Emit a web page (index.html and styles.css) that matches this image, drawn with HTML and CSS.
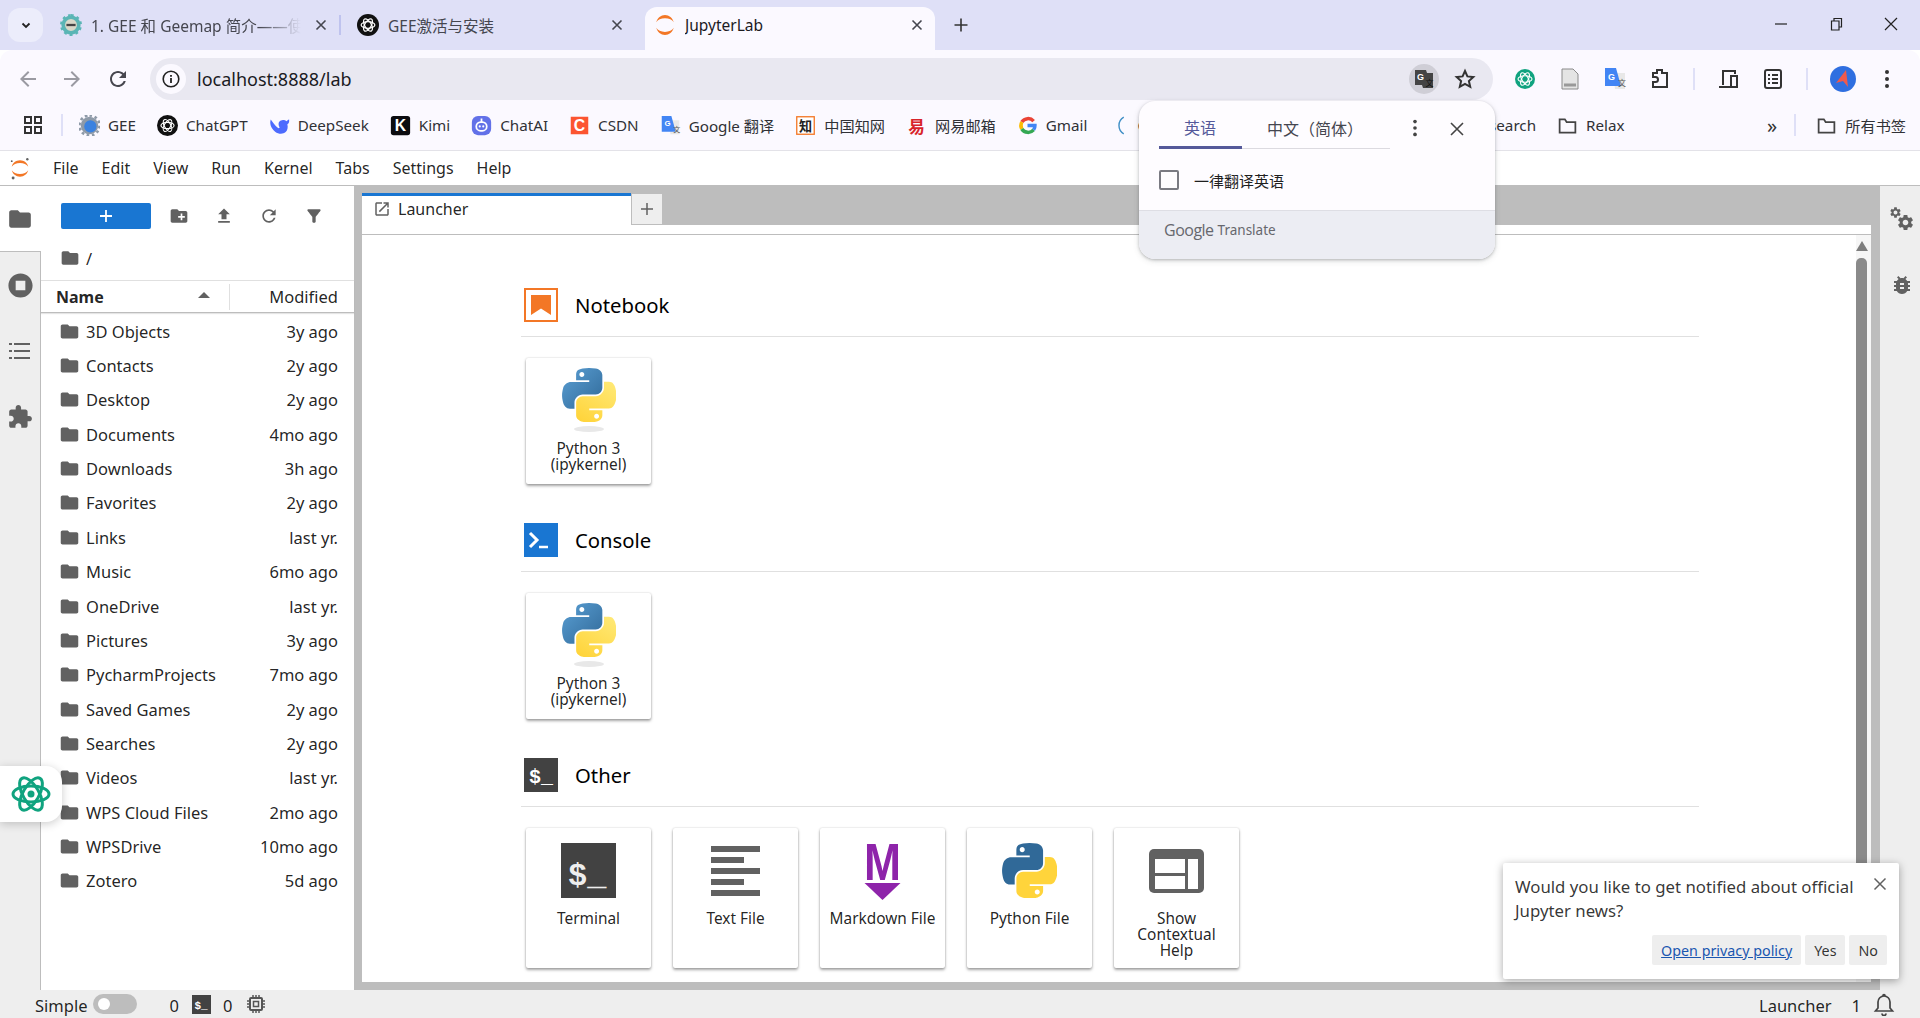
FILE: index.html
```html
<!DOCTYPE html>
<html lang="zh">
<head>
<meta charset="utf-8">
<title>JupyterLab</title>
<link rel="stylesheet" href="styles.css">
</head>
<body>
<svg class="defs" width="0" height="0" aria-hidden="true">
  <defs>
    <linearGradient id="pyb" x1="0" y1="0" x2="1" y2="1"><stop offset="0" stop-color="#5a9fd4"/><stop offset="1" stop-color="#306998"/></linearGradient>
    <linearGradient id="pyy" x1="0.2" y1="1" x2="0.8" y2="0"><stop offset="0" stop-color="#ffd43b"/><stop offset="1" stop-color="#ffe873"/></linearGradient>
    <symbol id="py-flat" viewBox="0 0 110 110">
      <path fill="#306998" d="M54.9 0c-4.58.02-8.96.41-12.8 1.09C30.8 3.09 28.73 7.27 28.73 14.98v10.18h26.73v3.39H18.7c-7.77 0-14.57 4.67-16.7 13.56-2.45 10.19-2.56 16.55 0 27.19 1.9 7.92 6.44 13.56 14.21 13.56h9.19V70.65c0-8.83 7.64-16.62 16.7-16.62h26.7c7.43 0 13.37-6.12 13.37-13.59V14.98c0-7.25-6.12-12.7-13.37-13.9C64.18.32 59.48-.02 54.9 0zM40.44 8.2c2.76 0 5.02 2.29 5.02 5.11 0 2.81-2.26 5.08-5.02 5.08-2.77 0-5.02-2.27-5.02-5.08 0-2.82 2.25-5.11 5.02-5.11z"/>
      <path fill="#ffd43b" d="M85.54 28.55v11.88c0 9.21-7.81 16.96-16.7 16.96H42.14c-7.31 0-13.37 6.26-13.37 13.59V96c0 7.25 6.3 11.51 13.37 13.59 8.46 2.49 16.58 2.94 26.7 0 6.73-1.95 13.37-5.87 13.37-13.59V85.82H55.5v-3.39h40.07c7.77 0 10.67-5.42 13.37-13.56 2.79-8.38 2.67-16.44 0-27.19-1.92-7.74-5.58-13.56-13.37-13.56H85.54zM70.51 92.99c2.77 0 5.02 2.27 5.02 5.08 0 2.82-2.25 5.11-5.02 5.11-2.76 0-5.02-2.29-5.02-5.11 0-2.81 2.26-5.08 5.02-5.08z"/>
    </symbol>
    <symbol id="py-grad" viewBox="0 0 110 110">
      <path fill="url(#pyb)" d="M54.9 0c-4.58.02-8.96.41-12.8 1.09C30.8 3.09 28.73 7.27 28.73 14.98v10.18h26.73v3.39H18.7c-7.77 0-14.57 4.67-16.7 13.56-2.45 10.19-2.56 16.55 0 27.19 1.9 7.92 6.44 13.56 14.21 13.56h9.19V70.65c0-8.83 7.64-16.62 16.7-16.62h26.7c7.43 0 13.37-6.12 13.37-13.59V14.98c0-7.25-6.12-12.7-13.37-13.9C64.18.32 59.48-.02 54.9 0zM40.44 8.2c2.76 0 5.02 2.29 5.02 5.11 0 2.81-2.26 5.08-5.02 5.08-2.77 0-5.02-2.27-5.02-5.08 0-2.82 2.25-5.11 5.02-5.11z"/>
      <path fill="url(#pyy)" d="M85.54 28.55v11.88c0 9.21-7.81 16.96-16.7 16.96H42.14c-7.31 0-13.37 6.26-13.37 13.59V96c0 7.25 6.3 11.51 13.37 13.59 8.46 2.49 16.58 2.94 26.7 0 6.73-1.95 13.37-5.87 13.37-13.59V85.82H55.5v-3.39h40.07c7.77 0 10.67-5.42 13.37-13.56 2.79-8.38 2.67-16.44 0-27.19-1.92-7.74-5.58-13.56-13.37-13.56H85.54zM70.51 92.99c2.77 0 5.02 2.27 5.02 5.08 0 2.82-2.25 5.11-5.02 5.11-2.76 0-5.02-2.29-5.02-5.11 0-2.81 2.26-5.08 5.02-5.08z"/>
    </symbol>
    <symbol id="folder" viewBox="0 0 24 24"><path fill="#616161" d="M10 4H4c-1.1 0-2 .9-2 2v12c0 1.1.9 2 2 2h16c1.1 0 2-.9 2-2V8c0-1.1-.9-2-2-2h-8l-2-2z"/></symbol>
    <symbol id="gear" viewBox="0 0 24 24"><path fill="#616161" d="M19.14 12.94c.04-.3.06-.61.06-.94 0-.32-.02-.64-.07-.94l2.03-1.58c.18-.14.23-.41.12-.61l-1.92-3.32c-.12-.22-.37-.29-.59-.22l-2.39.96c-.5-.38-1.03-.7-1.62-.94l-.36-2.54c-.04-.24-.24-.41-.48-.41h-3.84c-.24 0-.43.17-.47.41l-.36 2.54c-.59.24-1.13.57-1.62.94l-2.39-.96c-.22-.08-.47 0-.59.22L2.74 8.87c-.12.21-.08.47.12.61l2.03 1.58c-.05.3-.09.63-.09.94s.02.64.07.94l-2.03 1.58c-.18.14-.23.41-.12.61l1.92 3.32c.12.22.37.29.59.22l2.39-.96c.5.38 1.03.7 1.62.94l.36 2.54c.05.24.24.41.48.41h3.84c.24 0 .44-.17.47-.41l.36-2.54c.59-.24 1.13-.56 1.62-.94l2.39.96c.22.08.47 0 .59-.22l1.92-3.32c.12-.22.07-.47-.12-.61l-2.01-1.58zM12 15.6c-1.98 0-3.6-1.62-3.6-3.6s1.62-3.6 3.6-3.6 3.6 1.62 3.6 3.6-1.62 3.6-3.6 3.6z"/></symbol>
    <symbol id="x" viewBox="0 0 16 16"><path fill="none" stroke="currentColor" stroke-width="1.6" d="M3.5 3.5l9 9M12.5 3.5l-9 9"/></symbol>
    <symbol id="openai" viewBox="0 0 24 24">
      <circle cx="12" cy="12" r="12" fill="#111"/>
      <g fill="none" stroke="#fff" stroke-width="1.3"><ellipse cx="12" cy="12" rx="7.5" ry="3.6"/><ellipse cx="12" cy="12" rx="7.5" ry="3.6" transform="rotate(60 12 12)"/><ellipse cx="12" cy="12" rx="7.5" ry="3.6" transform="rotate(120 12 12)"/></g>
    </symbol>
    <symbol id="bm-folder" viewBox="0 0 24 24"><path fill="none" stroke="#444" stroke-width="2" d="M3 5h6l2 3h10v12H3z"/></symbol>
    <symbol id="gt" viewBox="0 0 24 24">
      <path fill="#e8e8e8" d="M10 6h12v16H12z"/>
      <path fill="#4285f4" d="M2 1h11l5 18H2z"/>
      <text x="5" y="13" class="svg-g">G</text>
      <text x="15" y="19" class="svg-wen">文</text>
    </symbol>
  </defs>
</svg>

<header class="tabstrip">
  <button class="tab-menu"><svg viewBox="0 0 12 12" width="12" height="12"><path d="M2.5 4.5L6 8l3.5-3.5" fill="none" stroke="#222" stroke-width="1.8"/></svg></button>
  <div class="tab tab-one">
    <svg class="fav" viewBox="0 0 24 24"><circle cx="12" cy="12" r="8.5" fill="#d8d8c8" stroke="#5ab5b5" stroke-width="4"/><path fill="none" stroke="#5ab5b5" stroke-width="3" stroke-dasharray="3 3.2" d="M12 1.5a10.5 10.5 0 1 1-.01 0"/><path d="M7 12h10" stroke="#444" stroke-width="2.5"/></svg>
    <span class="tab-title fade">1. GEE 和 Geemap 简介——使用</span>
    <svg class="tab-x" width="16" height="16"><use href="#x"/></svg>
  </div>
  <i class="tab-sep"></i>
  <div class="tab tab-two">
    <svg class="fav" width="22" height="22"><use href="#openai"/></svg>
    <span class="tab-title">GEE激活与安装</span>
    <svg class="tab-x" width="16" height="16"><use href="#x"/></svg>
  </div>
  <div class="tab tab-active">
    <svg class="fav" viewBox="0 0 24 24"><path fill="#f37726" d="M12 4.5c-4.3 0-8 1.700-9.500 4.400C3.700 4.300 7.500 1 12 1s8.300 3.300 9.500 7.900C20 6.200 16.300 4.500 12 4.500z"/><path fill="#f37726" d="M12 19.500c4.300 0 8-1.700 9.500-4.400C20.300 19.700 16.500 23 12 23s-8.300-3.300-9.500-7.900C4 17.800 7.700 19.500 12 19.500z"/></svg>
    <span class="tab-title">JupyterLab</span>
    <svg class="tab-x" width="16" height="16"><use href="#x"/></svg>
  </div>
  <svg class="new-tab" viewBox="0 0 16 16" width="16" height="16"><path d="M8 1.500v13M1.500 8h13" stroke="#333" stroke-width="1.600"/></svg>
  <div class="win-btns">
    <svg viewBox="0 0 16 16" width="16" height="16"><path d="M2 8h12" stroke="#222" stroke-width="1.200"/></svg>
    <svg viewBox="0 0 16 16" width="16" height="16"><path d="M3.500 5h7.500v9H3.500zM6 5V2.500h7.500V11H11" fill="none" stroke="#222" stroke-width="1.200"/></svg>
    <svg viewBox="0 0 16 16" width="16" height="16"><path d="M2 2l12 12M14 2L2 14" stroke="#222" stroke-width="1.200"/></svg>
  </div>
</header>

<section class="toolbar">
  <svg class="nav nav-off" viewBox="0 0 24 24"><path fill="#9a9aa2" d="M20 11H7.800l5.600-5.600L12 4l-8 8 8 8 1.400-1.400L7.800 13H20z"/></svg>
  <svg class="nav nav-off" viewBox="0 0 24 24"><path fill="#9a9aa2" d="M4 11h12.200l-5.600-5.600L12 4l8 8-8 8-1.400-1.400 5.600-5.600H4z"/></svg>
  <svg class="nav" viewBox="0 0 24 24"><path fill="#47474f" d="M17.650 6.350C16.200 4.900 14.210 4 12 4c-4.420 0-7.990 3.580-7.990 8s3.570 8 7.990 8c3.730 0 6.840-2.550 7.730-6h-2.080c-.82 2.330-3.040 4-5.650 4-3.310 0-6-2.690-6-6s2.690-6 6-6c1.660 0 3.140.69 4.220 1.780L13 11h7V4l-2.350 2.350z"/></svg>
  <div class="omnibox">
    <span class="info"><svg viewBox="0 0 20 20" width="20" height="20"><circle cx="10" cy="10" r="7.800" fill="none" stroke="#222" stroke-width="1.600"/><path d="M10 9v5M10 6v1.800" stroke="#222" stroke-width="1.800"/></svg></span>
    <span class="url">localhost:8888/lab</span>
    <span class="omni-gt"><svg viewBox="0 0 24 24" width="24" height="24"><path fill="#444" d="M3 3h11l1 3h6v15H11l-1-3H3z"/><text x="5" y="13" class="svg-gw">G</text><text x="13.500" y="19" class="svg-wenw">文</text></svg></span>
    <svg class="star" viewBox="0 0 24 24" width="24" height="24"><path fill="none" stroke="#333" stroke-width="2" d="M12 4l2.400 5.400 5.900.6-4.400 4 1.300 5.800-5.200-3-5.200 3 1.300-5.800-4.400-4 5.900-.6z"/></svg>
  </div>
  <div class="ext-row">
    <svg viewBox="0 0 24 24"><circle cx="12" cy="12" r="10" fill="#10a37f"/><g fill="none" stroke="#fff" stroke-width="1.100"><ellipse cx="12" cy="12" rx="7" ry="3.200"/><ellipse cx="12" cy="12" rx="7" ry="3.200" transform="rotate(60 12 12)"/><ellipse cx="12" cy="12" rx="7" ry="3.200" transform="rotate(120 12 12)"/></g></svg>
    <svg viewBox="0 0 24 24"><path fill="#e4e4e4" stroke="#8a8a8a" d="M4 2h11l5 5v15H4z"/><path d="M6 18h12" stroke="#999" stroke-width="3"/></svg>
    <svg viewBox="0 0 24 24"><use href="#gt"/></svg>
    <svg viewBox="0 0 24 24"><path fill="none" stroke="#333" stroke-width="2" d="M5 6h4V3h5v3h5v14H5v-5h2.500a2.500 2.500 0 0 0 0-5H5z"/></svg>
    <i class="ext-sep"></i>
    <svg viewBox="0 0 24 24"><path fill="none" stroke="#333" stroke-width="2" d="M19 7V4H7v14M3 20h11M15 9h6v11h-6z"/></svg>
    <svg viewBox="0 0 24 24"><rect x="4" y="3" width="16" height="18" rx="2" fill="none" stroke="#333" stroke-width="2"/><path d="M7 8h2M11 8h6M7 12h2M11 12h6M7 16h2M11 16h6" stroke="#333" stroke-width="2"/></svg>
    <i class="ext-sep"></i>
    <svg class="avatar" viewBox="0 0 28 28"><circle cx="14" cy="14" r="13" fill="#2f6fe0"/><path fill="#ef5a4c" d="M17 5l2 17-5-6-7 2z"/></svg>
    <svg class="kebab" viewBox="0 0 24 24"><circle cx="12" cy="5" r="2" fill="#333"/><circle cx="12" cy="12" r="2" fill="#333"/><circle cx="12" cy="19" r="2" fill="#333"/></svg>
  </div>
</section>

<nav class="bookmarks">
  <svg class="apps" viewBox="0 0 22 22" width="22" height="22"><path fill="none" stroke="#333" stroke-width="2" d="M3 3h6v6H3zM13 3h6v6h-6zM3 13h6v6H3zM13 13h6v6h-6z"/></svg>
  <i class="bm-sep"></i>
  <a class="bm"><svg viewBox="0 0 24 24"><circle cx="12" cy="12" r="10" fill="#8e9aa8"/><path fill="none" stroke="#8e9aa8" stroke-width="3" stroke-dasharray="3 3" d="M12 .5a11.500 11.500 0 1 1-.01 0"/><circle cx="13" cy="13" r="7" fill="#3b82e0"/></svg>GEE</a>
  <a class="bm"><svg viewBox="0 0 24 24"><use href="#openai"/></svg>ChatGPT</a>
  <a class="bm"><svg viewBox="0 0 24 24"><path fill="#4d6bfe" d="M23 5c-1.500 0-2 1.500-3 2-1.500-1-3-1.500-5-1-4 .5-5 4-3 8 .5 1-1 1.500-2 .5C7 12 4 8 2 5c-1.500 4 0 10 5 14 4 3 9 3 12 .5 2-2 3-5 2-9 1-.5 2.500-2 2-5.500z"/></svg>DeepSeek</a>
  <a class="bm"><svg viewBox="0 0 24 24"><rect x="1" y="1" width="22" height="22" rx="3" fill="#0c0c10"/><text x="12" y="18" class="svg-k">K</text></svg>Kimi</a>
  <a class="bm"><svg viewBox="0 0 24 24"><rect x="1" y="1" width="22" height="22" rx="7" fill="#6271e8"/><rect x="6" y="8" width="12" height="10" rx="5" fill="none" stroke="#fff" stroke-width="2"/><circle cx="10" cy="13" r="1.200" fill="#fff"/><circle cx="14" cy="13" r="1.200" fill="#fff"/><path d="M12 4v4" stroke="#fff" stroke-width="2"/></svg>ChatAI</a>
  <a class="bm"><svg viewBox="0 0 24 24"><rect x="2" y="2" width="20" height="20" fill="#fc5531"/><text x="12" y="18" class="svg-k">C</text></svg>CSDN</a>
  <a class="bm"><svg viewBox="0 0 24 24"><use href="#gt"/></svg>Google 翻译</a>
  <a class="bm"><svg viewBox="0 0 24 24"><rect x="2" y="2" width="20" height="20" fill="#fff" stroke="#f37726" stroke-width="1.500"/><text x="12" y="18" class="svg-zhi">知</text></svg>中国知网</a>
  <a class="bm"><svg viewBox="0 0 24 24"><text x="12" y="20" class="svg-yi">易</text></svg>网易邮箱</a>
  <a class="bm"><svg viewBox="0 0 24 24"><path fill="none" stroke-width="4" stroke="#ea4335" d="M19 7a8.500 8.500 0 0 0-13.500 1"/><path fill="none" stroke-width="4" stroke="#fbbc05" d="M5.500 8a8.500 8.500 0 0 0 0 8"/><path fill="none" stroke-width="4" stroke="#34a853" d="M5.500 16a8.500 8.500 0 0 0 13.500 1"/><path fill="none" stroke-width="4" stroke="#4285f4" d="M19 17a8.500 8.500 0 0 0 1.500-5H12"/></svg>Gmail</a>
  <a class="bm"><svg viewBox="0 0 24 24"><path fill="none" stroke="#3f8fc6" stroke-width="1.600" d="M18 2.500A11 11 0 0 0 18 21.500"/></svg>Copilot</a>
  <a class="bm bm-search">Research</a>
  <a class="bm bm-relax"><svg viewBox="0 0 24 24"><use href="#bm-folder"/></svg>Relax</a>
  <span class="bm-more">»</span>
  <i class="bm-sep bm-sep-r"></i>
  <a class="bm bm-all"><svg viewBox="0 0 24 24"><use href="#bm-folder"/></svg>所有书签</a>
</nav>

<main class="lab">
  <div class="menubar">
    <svg class="jp-logo" viewBox="0 0 24 24" width="22" height="26"><path fill="#f37726" d="M12 6.500c-4 0-7.500 1.500-9 4C4 6.500 7.500 3.500 12 3.500s8 3 9 7c-1.500-2.500-5-4-9-4z"/><path fill="#f37726" d="M12 18.500c4 0 7.500-1.500 9-4-1 4-4.500 7-9 7s-8-3-9-7c1.500 2.500 5 4 9 4z"/><circle cx="20" cy="2.500" r="1.300" fill="#616161"/><circle cx="3" cy="4.500" r="1" fill="#616161"/><circle cx="4.500" cy="23" r="1.600" fill="#616161"/></svg>
    <span>File</span><span>Edit</span><span>View</span><span>Run</span><span>Kernel</span><span>Tabs</span><span>Settings</span><span>Help</span>
  </div>
  <div class="lab-body">
    <aside class="side-left">
      <div class="side-tab side-active"><svg viewBox="0 0 24 24" width="26" height="26"><use href="#folder"/></svg></div>
      <div class="side-rest">
        <div class="side-tab"><svg viewBox="0 0 24 24" width="29" height="29"><path fill="#616161" d="M12 2C6.480 2 2 6.480 2 12s4.480 10 10 10 10-4.480 10-10S17.520 2 12 2zm4 14H8V8h8v8z"/></svg></div>
        <div class="side-tab"><svg viewBox="0 0 24 24" width="24" height="24"><path d="M6 5h16M6 12h16M6 19h16M1 5h3M1 12h3M1 19h3" stroke="#616161" stroke-width="2" fill="none"/></svg></div>
        <div class="side-tab"><svg viewBox="0 0 24 24" width="26" height="26"><path fill="#616161" d="M20.500 11H19V7c0-1.100-.9-2-2-2h-4V3.500C13 2.120 11.880 1 10.500 1S8 2.120 8 3.500V5H4c-1.100 0-1.990.9-1.990 2v3.800H3.500c1.490 0 2.700 1.210 2.700 2.700s-1.210 2.700-2.700 2.700H2V20c0 1.100.9 2 2 2h3.800v-1.500c0-1.490 1.210-2.700 2.700-2.700 1.490 0 2.700 1.210 2.700 2.700V22H17c1.100 0 2-.9 2-2v-4h1.500c1.380 0 2.500-1.120 2.500-2.500S21.880 11 20.500 11z"/></svg></div>
      </div>
    </aside>

    <section class="files">
      <div class="file-tools">
        <button class="new-btn"><svg viewBox="0 0 16 16" width="16" height="16"><path d="M8 2v12M2 8h12" stroke="#fff" stroke-width="1.800"/></svg></button>
        <svg viewBox="0 0 24 24" width="20" height="20"><path fill="#616161" d="M20 6h-8l-2-2H4c-1.110 0-2 .89-2 2v12c0 1.110.89 2 2 2h16c1.110 0 2-.89 2-2V8c0-1.110-.89-2-2-2zm-1 8h-3v3h-2v-3h-3v-2h3V9h2v3h3v2z"/></svg>
        <svg viewBox="0 0 24 24" width="20" height="20"><path fill="#616161" d="M9 16h6v-6h4l-7-7-7 7h4zm-4 2h14v2H5z"/></svg>
        <svg viewBox="0 0 24 24" width="20" height="20"><path fill="#616161" d="M17.650 6.350C16.200 4.900 14.210 4 12 4c-4.420 0-7.990 3.580-7.990 8s3.570 8 7.990 8c3.730 0 6.840-2.550 7.730-6h-2.080c-.82 2.330-3.040 4-5.650 4-3.310 0-6-2.690-6-6s2.690-6 6-6c1.660 0 3.140.69 4.220 1.780L13 11h7V4l-2.350 2.350z"/></svg>
        <svg viewBox="0 0 24 24" width="20" height="20"><path fill="#616161" d="M4.250 5.610C6.270 8.200 10 13 10 13v6c0 .55.45 1 1 1h2c.55 0 1-.45 1-1v-6s3.720-4.800 5.740-7.390C20.250 4.950 19.780 4 18.950 4H5.040c-.83 0-1.300.95-.79 1.610z"/></svg>
      </div>
      <div class="crumbs"><svg viewBox="0 0 24 24" width="20" height="20"><use href="#folder"/></svg><span>/</span></div>
      <div class="file-head">
        <div class="col-name">Name<svg viewBox="0 0 12 6" width="12" height="6"><path d="M0 6L6 0l6 6z" fill="#616161"/></svg></div>
        <div class="col-mod">Modified</div>
      </div>
      <ul class="file-list">
        <li><svg viewBox="0 0 24 24"><use href="#folder"/></svg><span class="fname">3D Objects</span><span>3y ago</span></li>
        <li><svg viewBox="0 0 24 24"><use href="#folder"/></svg><span class="fname">Contacts</span><span>2y ago</span></li>
        <li><svg viewBox="0 0 24 24"><use href="#folder"/></svg><span class="fname">Desktop</span><span>2y ago</span></li>
        <li><svg viewBox="0 0 24 24"><use href="#folder"/></svg><span class="fname">Documents</span><span>4mo ago</span></li>
        <li><svg viewBox="0 0 24 24"><use href="#folder"/></svg><span class="fname">Downloads</span><span>3h ago</span></li>
        <li><svg viewBox="0 0 24 24"><use href="#folder"/></svg><span class="fname">Favorites</span><span>2y ago</span></li>
        <li><svg viewBox="0 0 24 24"><use href="#folder"/></svg><span class="fname">Links</span><span>last yr.</span></li>
        <li><svg viewBox="0 0 24 24"><use href="#folder"/></svg><span class="fname">Music</span><span>6mo ago</span></li>
        <li><svg viewBox="0 0 24 24"><use href="#folder"/></svg><span class="fname">OneDrive</span><span>last yr.</span></li>
        <li><svg viewBox="0 0 24 24"><use href="#folder"/></svg><span class="fname">Pictures</span><span>3y ago</span></li>
        <li><svg viewBox="0 0 24 24"><use href="#folder"/></svg><span class="fname">PycharmProjects</span><span>7mo ago</span></li>
        <li><svg viewBox="0 0 24 24"><use href="#folder"/></svg><span class="fname">Saved Games</span><span>2y ago</span></li>
        <li><svg viewBox="0 0 24 24"><use href="#folder"/></svg><span class="fname">Searches</span><span>2y ago</span></li>
        <li><svg viewBox="0 0 24 24"><use href="#folder"/></svg><span class="fname">Videos</span><span>last yr.</span></li>
        <li><svg viewBox="0 0 24 24"><use href="#folder"/></svg><span class="fname">WPS Cloud Files</span><span>2mo ago</span></li>
        <li><svg viewBox="0 0 24 24"><use href="#folder"/></svg><span class="fname">WPSDrive</span><span>10mo ago</span></li>
        <li><svg viewBox="0 0 24 24"><use href="#folder"/></svg><span class="fname">Zotero</span><span>5d ago</span></li>
      </ul>
    </section>

    <section class="work">
      <div class="dock-tabs">
        <div class="dock-tab"><svg viewBox="0 0 24 24" width="18" height="18"><path fill="#616161" d="M19 19H5V5h7V3H5c-1.110 0-2 .9-2 2v14c0 1.100.89 2 2 2h14c1.100 0 2-.9 2-2v-7h-2v7zM14 3v2h3.590l-9.830 9.830 1.410 1.410L19 6.410V10h2V3h-7z"/></svg><span>Launcher</span></div>
        <div class="dock-add"><svg viewBox="0 0 16 16" width="16" height="16"><path d="M8 2v12M2 8h12" stroke="#616161" stroke-width="1.500"/></svg></div>
      </div>
      <div class="dock-strip"></div>
      <div class="launcher-wrap">
        <div class="launcher">
          <div class="l-section l-kernel">
            <div class="l-head">
              <svg class="l-icon" viewBox="0 0 34 34"><rect x="1" y="1" width="32" height="32" fill="none" stroke="#f37726" stroke-width="2"/><path fill="#f37726" d="M7 7h20v20l-10-6.500L7 27z"/></svg>
              <h2>Notebook</h2>
            </div>
            <div class="l-cards">
              <div class="card card-kernel"><svg class="k-logo" viewBox="0 0 54 64"><use href="#py-grad" width="54" height="54"/><ellipse cx="27" cy="61" rx="15" ry="3" fill="#e8e8e8"/></svg><p>Python 3<br>(ipykernel)</p></div>
            </div>
          </div>
          <div class="l-section l-kernel">
            <div class="l-head">
              <svg class="l-icon" viewBox="0 0 34 34"><rect width="34" height="34" fill="#1976d2"/><path d="M6 10l7 7-7 7" fill="none" stroke="#fff" stroke-width="3"/><path d="M15 24h9" stroke="#fff" stroke-width="2.500"/></svg>
              <h2>Console</h2>
            </div>
            <div class="l-cards">
              <div class="card card-kernel"><svg class="k-logo" viewBox="0 0 54 64"><use href="#py-grad" width="54" height="54"/><ellipse cx="27" cy="61" rx="15" ry="3" fill="#e8e8e8"/></svg><p>Python 3<br>(ipykernel)</p></div>
            </div>
          </div>
          <div class="l-section">
            <div class="l-head">
              <svg class="l-icon" viewBox="0 0 34 34"><rect width="34" height="34" fill="#424242"/><text x="5" y="25" class="svg-dollar">$_</text></svg>
              <h2>Other</h2>
            </div>
            <div class="l-cards">
              <div class="card"><svg class="c-icon" viewBox="0 0 55 55"><rect width="55" height="55" fill="#424242"/><text x="7" y="42" class="svg-dollar-lg">$_</text></svg><p>Terminal</p></div>
              <div class="card"><svg class="c-icon" viewBox="0 0 55 55"><path fill="#616161" d="M3 3h49v6H3zM3 14h33v6H3zM3 25h49v6H3zM3 36h33v6H3zM3 47h49v6H3z"/></svg><p>Text File</p></div>
              <div class="card"><svg class="c-icon c-md" viewBox="0 0 55 55"><text x="9" y="37" class="svg-md" textLength="37" lengthAdjust="spacingAndGlyphs">M</text><path fill="#8e24aa" d="M9.500 40h36L27.500 57z"/></svg><p>Markdown File</p></div>
              <div class="card"><svg class="c-icon" viewBox="0 0 55 55"><use href="#py-flat" width="55" height="55"/></svg><p>Python File</p></div>
              <div class="card"><svg class="c-icon" viewBox="0 0 55 55"><rect y="6" width="55" height="44" rx="5" fill="#616161"/><path fill="#fff" d="M6 16h30v14H6zM6 33h30v13H6zM39 16h10v30H39z"/></svg><p>Show<br>Contextual<br>Help</p></div>
            </div>
          </div>
        </div>
        <div class="scrollbar">
          <i class="sb-up"></i>
          <i class="sb-thumb"></i>
        </div>
      </div>
    </section>

    <aside class="side-right">
      <div class="r-tab"><svg viewBox="0 0 26 26" width="26" height="26"><use href="#gear" x="0" y="0" width="13" height="13"/><use href="#gear" x="7" y="7" width="19" height="19"/></svg></div>
      <div class="r-tab"><svg viewBox="0 0 24 24" width="24" height="24"><path fill="#616161" d="M20 8h-2.810c-.45-.78-1.070-1.450-1.820-1.960L17 4.410 15.590 3l-2.170 2.170C12.960 5.060 12.490 5 12 5s-.96.06-1.410.17L8.410 3 7 4.410l1.620 1.630C7.880 6.550 7.260 7.220 6.810 8H4v2h2.090c-.05.33-.09.66-.09 1v1H4v2h2v1c0 .34.04.67.09 1H4v2h2.810c1.040 1.790 2.970 3 5.190 3s4.150-1.210 5.190-3H20v-2h-2.090c.05-.33.09-.66.09-1v-1h2v-2h-2v-1c0-.34-.04-.67-.09-1H20V8zm-6 8h-4v-2h4v2zm0-4h-4v-2h4v2z"/></svg></div>
    </aside>
  </div>
  <footer class="status">
    <span class="st-simple">Simple</span>
    <span class="toggle"><i></i></span>
    <span class="st-num">0</span>
    <svg class="st-term" viewBox="0 0 19 19" width="19" height="19"><rect width="19" height="19" fill="#424242"/><text x="2.500" y="14" class="svg-dollar-sm">$_</text></svg>
    <span class="st-num2">0</span>
    <svg class="st-chip" viewBox="0 0 20 20" width="20" height="20"><path fill="none" stroke="#555" stroke-width="2" d="M5 4h10a1 1 0 0 1 1 1v10a1 1 0 0 1-1 1H5a1 1 0 0 1-1-1V5a1 1 0 0 1 1-1z"/><rect x="7.500" y="7.500" width="5" height="5" fill="none" stroke="#555" stroke-width="1.500"/><path d="M7 1v2M10 1v2M13 1v2M7 17v2M10 17v2M13 17v2M1 7h2M1 10h2M1 13h2M17 7h2M17 10h2M17 13h2" stroke="#555" stroke-width="1.500"/></svg>
    <span class="st-launcher">Launcher</span>
    <span class="st-one">1</span>
    <svg class="st-bell" viewBox="0 0 24 24" width="24" height="24"><path fill="none" stroke="#444" stroke-width="1.700" d="M3.500 19h17l-2.500-3V10a6 6 0 0 0-12 0v6zM10 21.500a2 2 0 0 0 4 0M11 3.500a1 1 0 0 1 2 0"/></svg>
  </footer>
</main>

<div class="gt-pop">
  <div class="gt-top">
    <div class="gt-tabs"><span class="gt-tab gt-tab-on">英语</span><span class="gt-tab">中文（简体）</span></div>
    <svg class="gt-kebab" viewBox="0 0 24 24" width="22" height="22"><circle cx="12" cy="5" r="2" fill="#444"/><circle cx="12" cy="12" r="2" fill="#444"/><circle cx="12" cy="19" r="2" fill="#444"/></svg>
    <svg class="gt-x" viewBox="0 0 16 16" width="16" height="16"><path d="M2 2l12 12M14 2L2 14" stroke="#444" stroke-width="1.600"/></svg>
  </div>
  <label class="gt-check"><i></i><span>一律翻译英语</span></label>
  <div class="gt-foot"><span class="gt-google">Google</span> <span class="gt-word">Translate</span></div>
</div>

<div class="notice">
  <p>Would you like to get notified about official Jupyter news?</p>
  <svg class="notice-x" viewBox="0 0 14 14" width="14" height="14"><path d="M1.500 1.500l11 11M12.500 1.500l-11 11" stroke="#616161" stroke-width="1.500"/></svg>
  <div class="notice-btns"><a class="nb-link">Open privacy policy</a><a>Yes</a><a>No</a></div>
</div>

<div class="float-ai"><svg viewBox="0 0 40 40" width="40" height="40"><g fill="none" stroke="#10a37f" stroke-width="3"><ellipse cx="20" cy="20" rx="18" ry="8"/><ellipse cx="20" cy="20" rx="18" ry="8" transform="rotate(60 20 20)"/><ellipse cx="20" cy="20" rx="18" ry="8" transform="rotate(120 20 20)"/></g><circle cx="20" cy="20" r="3.500" fill="#10a37f"/></svg></div>
</body>
</html>
```

FILE: styles.css
```css
* { box-sizing: border-box; }
html, body { margin: 0; padding: 0; height: 100%; overflow: hidden; }
body {
  width: 1920px; height: 1018px; position: relative;
  font-family: "Noto Sans", "Noto Sans CJK SC", sans-serif;
  color: #1f1f1f; background: #fff; display: flex; flex-direction: column;
}
.defs { position: absolute; }
p, h2, ul { margin: 0; padding: 0; }
i { display: block; font-style: normal; }
button { border: 0; padding: 0; }

.svg-g { font: 700 9px "Liberation Sans", sans-serif; fill: #fff; }
.svg-wen { font: 400 8px "Noto Sans CJK SC", sans-serif; fill: #555; }
.svg-gw { font: 700 9px "Liberation Sans", sans-serif; fill: #fff; }
.svg-wenw { font: 400 8px "Noto Sans CJK SC", sans-serif; fill: #111; }
.svg-k { font: 700 18px "Liberation Sans", sans-serif; fill: #fff; text-anchor: middle; }
.svg-zhi { font: 700 15px "Noto Sans CJK SC", sans-serif; fill: #222; text-anchor: middle; }
.svg-yi { font: 700 19px "Noto Sans CJK SC", sans-serif; fill: #d8232a; text-anchor: middle; }
.svg-dollar { font: 700 20px "Liberation Mono", monospace; fill: #fff; }
.svg-dollar-lg { font: 700 32px "Liberation Mono", monospace; fill: #eee; }
.svg-dollar-sm { font: 700 11px "Liberation Mono", monospace; fill: #fff; }
.svg-md { font: 700 52px "Liberation Sans", sans-serif; fill: #8e24aa; }

/* browser chrome */
.tabstrip { height: 50px; flex: none; background: #dfe0f7; display: flex; align-items: flex-end; font-size: 15.5px; color: #45464f; }
.tab-menu { width: 35px; height: 34px; border-radius: 12px; background: #ecedfb; margin: 0 7px 8px 8px; display: flex; align-items: center; justify-content: center; }
.tab { height: 43px; display: flex; align-items: center; padding-bottom: 7px; }
.tab-one { width: 289px; padding-left: 10px; }
.tab-one .tab-x { margin-right: 10px; }
.tab-two { width: 303px; padding-left: 16px; }
.tab-two .tab-x { margin-right: 19px; }
.tab-active { width: 290px; padding-left: 9px; margin-left: 1px; background: #fbf9ff; border-radius: 12px 12px 0 0; color: #1b1b1f; }
.tab-active .tab-x { margin-right: 10px; }
.fav { width: 22px; height: 22px; flex: none; }
.tab-title { margin-left: 9px; flex: 1; white-space: nowrap; overflow: hidden; }
.fade { -webkit-mask-image: linear-gradient(90deg, #000 80%, transparent); mask-image: linear-gradient(90deg, #000 80%, transparent); }
.tab-x { flex: none; margin: 0 12px 0 12px; color: #45464f; }
.tab-sep { width: 2px; height: 20px; background: #bfc3ee; margin: 0 0 15px 0; }
.new-tab { margin: 0 0 17px 18px; }
.win-btns { margin-left: auto; display: flex; gap: 39px; padding-right: 21px; align-self: flex-start; padding-top: 16px; }

.toolbar { height: 50px; flex: none; background: #fbf9ff; border-radius: 12px 12px 0 0; display: flex; align-items: flex-start; padding-top: 8px; }
.nav { width: 24px; height: 24px; margin: 9px 0 0 16px; flex: none; }
.nav + .nav { margin-left: 20px; }
.nav + .nav + .nav { margin-left: 22px; }
.omnibox { margin-left: 20px; width: 1347px; height: 42px; border-radius: 21px; background: #e9e8f1; display: flex; align-items: center; padding: 0 16px 0 6px; }
.info { width: 30px; height: 30px; border-radius: 50%; background: #fbf9ff; display: flex; align-items: center; justify-content: center; }
.url { margin-left: 11px; font-size: 18px; color: #1b1b1f; }
.omni-gt { margin-left: auto; width: 30px; height: 30px; border-radius: 50%; background: #cfced6; display: flex; align-items: center; justify-content: center; }
.star { margin-left: 14px; }
.ext-row { display: flex; align-items: center; height: 42px; margin-left: 20px; }
.ext-row svg { width: 24px; height: 24px; margin-right: 21px; flex: none; }
.ext-row .avatar { width: 28px; height: 28px; margin-right: 18px; }
.ext-sep { width: 2px; height: 22px; background: #dfe0f7; margin-right: 21px; }

.bookmarks { height: 51px; flex: none; background: #fbf9ff; border-bottom: 1px solid #e3e2e8; display: flex; align-items: center; padding: 0 14px 0 22px; font-size: 15.2px; color: #303136; }
.bm-sep { width: 2px; height: 22px; background: #dfe0f7; margin: 0 16px 0 17px; }
.bm { display: flex; align-items: center; gap: 8px; margin-right: 21px; white-space: nowrap; }
.bm svg { width: 21px; height: 21px; flex: none; }
.bm-search { margin-left: 262px; }
.bm-more { font-size: 20px; margin-left: auto; color: #333; }
.bm-sep-r { margin: 0 20px 0 17px; }
.bm-all { margin-right: 0; }

/* JupyterLab */
.lab { flex: 1; display: flex; flex-direction: column; min-height: 0; font-size: 16.5px; color: rgba(0,0,0,.87); }
.menubar { height: 35px; flex: none; display: flex; align-items: center; gap: 23px; background: #fff; border-bottom: 1px solid #bdbdbd; font-size: 16px; padding-left: 9px; }
.jp-logo { margin-right: -1px; }
.lab-body { height: 804px; flex: none; display: flex; background: #bdbdbd; }

.side-left { width: 41px; flex: none; background: #eee; display: flex; flex-direction: column; }
.side-tab { height: 66px; display: flex; align-items: center; justify-content: center; }
.side-active { background: #fff; height: 65px; padding-right: 1px; }
.side-rest { flex: 1; border-top: 1px solid #bdbdbd; border-right: 1px solid #bdbdbd; }

.files { width: 313px; flex: none; background: #fff; display: flex; flex-direction: column; }
.file-tools { height: 60px; flex: none; display: flex; align-items: center; padding: 0 0 0 20px; gap: 25px; }
.new-btn { width: 90px; height: 26px; border-radius: 2px; background: #1976d2; display: flex; align-items: center; justify-content: center; margin-right: -7px; }
.crumbs { height: 34px; flex: none; display: flex; align-items: center; gap: 6px; padding: 0 0 10px 19px; }
.file-head { height: 33px; flex: none; display: flex; align-items: center; border-top: 1px solid #e0e0e0; border-bottom: 1px solid #bdbdbd; box-shadow: 0 1px 1px rgba(0,0,0,.1); }
.col-name { width: 189px; height: 26px; display: flex; align-items: center; justify-content: space-between; padding: 0 19px 0 15px; font-weight: 700; border-right: 1px solid #e0e0e0; font-size: 16px; }
.col-name svg { margin-bottom: 4px; }
.col-mod { flex: 1; text-align: right; padding-right: 16px; }
.file-list { list-style: none; padding-top: 1px; }
.file-list li { height: 34.36px; display: flex; align-items: center; padding: 0 16px 0 18px; }
.file-list svg { width: 21px; height: 21px; flex: none; }
.fname { flex: 1; margin-left: 6px; }

.work { flex: 1; margin-left: 8px; margin-bottom: 8px; min-width: 0; display: flex; flex-direction: column; }
.dock-tabs { height: 39px; flex: none; display: flex; padding-top: 7px; }
.dock-tab { width: 269px; height: 32px; border-top: 3px solid #1976d2; background: #fff; display: flex; align-items: center; gap: 7px; padding: 0 0 3px 11px; font-size: 16px; }
.dock-add { width: 32px; height: 32px; background: #eee; border: 1px solid #bdbdbd; display: flex; align-items: center; justify-content: center; }
.dock-strip { height: 10px; flex: none; background: #fff; border-bottom: 1px solid #bdbdbd; margin-right: 9px; }
.launcher-wrap { flex: 1; background: #fff; display: flex; min-height: 0; margin-right: 9px; }
.launcher { flex: 1; padding: 53px 0 0 159px; }
.l-section { width: 1178px; margin-bottom: 38px; }
.l-kernel { margin-bottom: 39px; }
.l-head { height: 49px; display: flex; align-items: flex-start; border-bottom: 1px solid #e0e0e0; padding-left: 3px; }
.l-icon { width: 34px; height: 34px; flex: none; }
.l-head h2 { font-size: 20.3px; font-weight: 400; margin-left: 17px; line-height: 34px; color: #000; }
.l-cards { display: flex; gap: 22px; margin-top: 21px; padding-left: 5px; }
.card { width: 125px; min-height: 126px; background: #fff; border-radius: 2px; box-shadow: 0 0 2px rgba(0,0,0,.2), 0 2px 3px rgba(0,0,0,.35); display: flex; flex-direction: column; align-items: center; padding-top: 15px; font-size: 15.4px; line-height: 16px; text-align: center; }
.l-cards .card:not(.card-kernel) { height: 140px; }
.card p { margin-top: 13px; }
.card-kernel { padding-top: 10px; }
.card-kernel p { margin-top: 9px; }
.k-logo { width: 54px; height: 64px; }
.c-icon { width: 55px; height: 55px; }
.c-md { overflow: visible; }

.scrollbar { width: 15px; flex: none; padding: 6px 0 0 0; display: flex; flex-direction: column; background: #f6f6f6; }
.sb-up { width: 0; height: 0; border-left: 6px solid transparent; border-right: 6px solid transparent; border-bottom: 10px solid #7e7e7e; margin-bottom: 7px; }
.sb-thumb { width: 11px; height: 630px; border-radius: 5px 5px 0 0; background: #8a8a8a; }

.side-right { width: 40px; flex: none; background: #eee; padding: 0 0 0 3px; }
.r-tab { height: 66px; display: flex; align-items: center; justify-content: center; }

.status { height: 28px; flex: none; background: #eee; display: flex; align-items: center; font-size: 16.5px; padding: 2px 0 0 35px; }
.toggle { width: 44px; height: 20px; border-radius: 10px; background: #bdbdbd; margin: -2px 0 0 6px; padding: 4px 0 0 5px; }
.toggle i { width: 12px; height: 12px; border-radius: 50%; background: #fff; }
.st-num { margin-left: 32px; }
.st-term { margin: -2px 0 0 13px; }
.st-num2 { margin-left: 12px; }
.st-chip { margin: -2px 0 0 14px; }
.st-launcher { margin-left: auto; }
.st-one { margin-left: 20px; }
.st-bell { margin: -2px 24px 0 11px; }

/* overlays */
.gt-pop { position: absolute; left: 1139px; top: 101px; width: 356px; height: 158px; border-radius: 16px; background: #fefcff; box-shadow: 0 1px 3px rgba(60,64,67,.3), 0 2px 6px rgba(60,64,67,.15); overflow: hidden; display: flex; flex-direction: column; }
.gt-top { height: 48px; flex: none; display: flex; padding-left: 20px; }
.gt-tabs { width: 231px; height: 48px; display: flex; border-bottom: 1px solid #dcdae0; font-size: 16px; }
.gt-tab { height: 47px; display: flex; align-items: center; padding-top: 7px; color: #45464f; margin-left: 25px; }
.gt-tab-on { width: 83px; margin: 0; padding-left: 25px; color: #55599a; border-bottom: 3px solid #55599a; height: 48px; }
.gt-kebab { margin: 16px 0 0 14px; }
.gt-x { margin: 20px 0 0 23px; }
.gt-check { display: flex; align-items: center; gap: 15px; padding-left: 20px; height: 60px; flex: none; font-size: 15px; margin-top: 1px; }
.gt-check i { width: 20px; height: 20px; border: 2px solid #7a7a82; border-radius: 2px; }
.gt-foot { flex: 1; background: #ecedf3; border-top: 1px solid #dedee4; display: flex; align-items: center; padding: 0 0 10px 25px; color: #66676d; font-size: 15px; gap: 4px; }
.gt-google { font-family: "Open Sans", sans-serif; font-weight: 400; font-size: 16px; letter-spacing: -.5px; }
.gt-word { font-size: 13.500px; }

.notice { position: absolute; left: 1503px; top: 863px; width: 396px; height: 116px; background: #fff; border-radius: 2px; box-shadow: 0 2px 8px rgba(0,0,0,.35); padding: 12px 12px 0 12px; }
.notice p { width: 345px; font-size: 16.8px; line-height: 24px; color: rgba(0,0,0,.8); }
.notice-x { position: absolute; right: 12px; top: 14px; }
.notice-btns { display: flex; justify-content: flex-end; gap: 4px; margin-top: 12px; font-size: 14.3px; }
.notice-btns a { height: 30px; padding: 0 9px; border-radius: 2px; background: #eee; display: flex; align-items: center; color: rgba(0,0,0,.8); }
.notice-btns .nb-link { color: #1a56b0; text-decoration: underline; }

.float-ai { position: absolute; left: 0; top: 766px; width: 62px; height: 56px; border-radius: 0 16px 16px 0; background: #fff; box-shadow: 0 2px 10px rgba(0,0,0,.2); display: flex; align-items: center; justify-content: center; }
```
